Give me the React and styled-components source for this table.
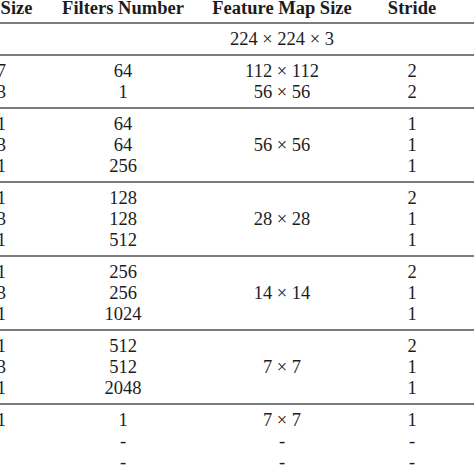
import React from 'react';
import styled, {createGlobalStyle} from 'styled-components';

const Global = createGlobalStyle`
    html, body {
        margin: 0;
        padding: 0;
        background: #fff;
        overflow: hidden;
    }
`
const Page = styled.div`
    width: 474px;
    height: 474px;
    overflow: hidden;
    font-family: "Liberation Serif", "DejaVu Serif", serif;
    font-size: 18.5px;
    color: #1c1c1c;
`
const Table = styled.div`
    width: 580px;
    margin-left: -80px;
`
const Group = styled.div`
    display: grid;
    grid-template-columns: 134px 138px 180px 80px 1fr;
    grid-auto-rows: ${p => p.$head ? '16px' : '21px'};
    padding: ${p => p.$head ? '0 0 5.5px' : '5px 0 4px'};
    border-top: ${p => p.$head ? 'none' : '2px solid #7c7c7c'};
    font-weight: ${p => p.$head ? 'bold' : 'normal'};
`
const Cell = styled.div`
    grid-column: ${p => p.$col};
    grid-row: ${p => p.$span ? `1 / span ${p.$span}` : 'auto'};
    align-self: center;
    text-align: center;
    line-height: ${p => p.$head ? '16px' : '21px'};
    white-space: nowrap;
`

const groups = [
    {rows: [['', '', '224 × 224 × 3', '']]},
    {rows: [['7 × 7', '64', '112 × 112', '2'], ['3 × 3', '1', '56 × 56', '2']]},
    {map: '56 × 56', rows: [['1 × 1', '64', '1'], ['3 × 3', '64', '1'], ['1 × 1', '256', '1']]},
    {map: '28 × 28', rows: [['1 × 1', '128', '2'], ['3 × 3', '128', '1'], ['1 × 1', '512', '1']]},
    {map: '14 × 14', rows: [['1 × 1', '256', '2'], ['3 × 3', '256', '1'], ['1 × 1', '1024', '1']]},
    {map: '7 × 7', rows: [['1 × 1', '512', '2'], ['3 × 3', '512', '1'], ['1 × 1', '2048', '1']]},
    {rows: [['1 × 1', '1', '7 × 7', '1'], ['', '-', '-', '-'], ['', '-', '-', '-']]},
]

function App() {
    return (
        <Page>
            <Global/>
            <Table>
                <Group $head>
                    <Cell $head $col={1}>Kernel Size</Cell>
                    <Cell $head $col={2}>Filters Number</Cell>
                    <Cell $head $col={3}>Feature Map Size</Cell>
                    <Cell $head $col={4}>Stride</Cell>
                </Group>
                {groups.map((g, i) => (
                    <Group key={i}>
                        {g.map && <Cell $col={3} $span={g.rows.length}>{g.map}</Cell>}
                        {g.rows.map((r, j) => g.map ? (
                            <React.Fragment key={j}>
                                <Cell $col={1} style={{gridRow: j + 1}}>{r[0]}</Cell>
                                <Cell $col={2} style={{gridRow: j + 1}}>{r[1]}</Cell>
                                <Cell $col={4} style={{gridRow: j + 1}}>{r[2]}</Cell>
                            </React.Fragment>
                        ) : (
                            <React.Fragment key={j}>
                                {r.map((c, k) => <Cell key={k} $col={k + 1}>{c}</Cell>)}
                            </React.Fragment>
                        ))}
                    </Group>
                ))}
            </Table>
        </Page>
    )
}

export default App
